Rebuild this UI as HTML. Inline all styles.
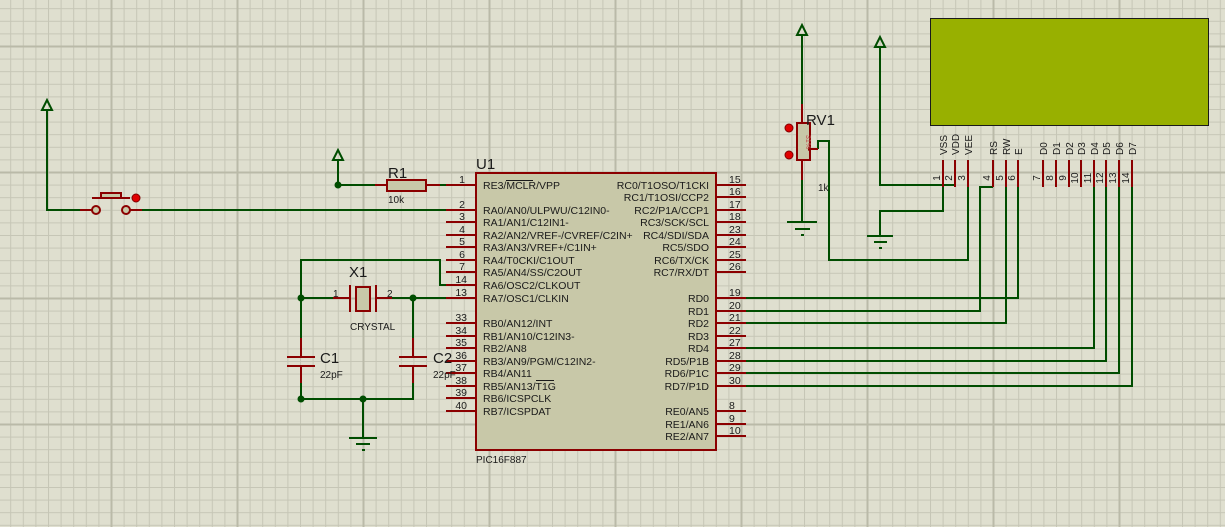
<!DOCTYPE html>
<html><head><meta charset="utf-8"><style>
html,body{margin:0;padding:0;background:#dfdfcf;}
svg{display:block;font-family:"Liberation Sans",Arial,sans-serif;}
</style></head><body>
<svg width="1225" height="527" viewBox="0 0 1225 527" xmlns="http://www.w3.org/2000/svg">
<defs>
<pattern id="mn" x="-15" y="-4.4" width="12.6" height="12.6" patternUnits="userSpaceOnUse">
<path d="M0.5 0V12.6M0 0.5H12.6" stroke="#c6c6b6" stroke-width="1" fill="none"/>
</pattern>
<pattern id="mj" x="-15.5" y="-80.5" width="126" height="126" patternUnits="userSpaceOnUse">
<path d="M1 0V126M0 1H126" stroke="#babaa8" stroke-width="2" fill="none"/>
</pattern>
</defs>
<rect width="1225" height="527" fill="#dfdfcf"/>
<rect width="1225" height="527" fill="url(#mn)"/>
<rect width="1225" height="527" fill="url(#mj)"/>

<rect x="930.5" y="18.5" width="278" height="107" fill="#98b000" stroke="#1a1a1a" stroke-width="1"/>

<g stroke="#004d00" stroke-width="2" fill="none">
<path d="M47 110V210H80"/>
<path d="M142 210H446"/>
<path d="M338 160V185H375"/>
<path d="M440 185H446"/>
<path d="M301 338V260H440V285H446"/>
<path d="M301 298H333"/>
<path d="M392 298H446"/>
<path d="M413 298V338"/>
<path d="M301 383V399H413V383"/>
<path d="M363 399V438"/>
<path d="M802 35V104"/>
<path d="M802 180V222"/>
<path d="M818 149V141H829V260H968V187"/>
<path d="M880 47V185H955"/>
<path d="M943 187V211H880V236"/>
<path d="M993 187H980V311H746"/>
<path d="M1006 187V323H746"/>
<path d="M1018 187V298H746"/>
<path d="M1094 187V348H746"/>
<path d="M1106 187V361H746"/>
<path d="M1119 187V373H746"/>
<path d="M1132 187V386H746"/>
</g>
<g stroke="#004d00" stroke-width="2" fill="none">
<path d="M42 110L47 100L52 110Z"/>
<path d="M333 160L338 150L343 160Z"/>
<path d="M797 35L802 25L807 35Z"/>
<path d="M875 47L880 37L885 47Z"/>
<path d="M349 438H377M356 444H370M362 450H365"/>
<path d="M787 222H817M795 229H810M801 235H804"/>
<path d="M867 236H893M874 242H887M879 248H882"/>
</g>
<g fill="#004d00">
<circle cx="338" cy="185" r="3.5"/>
<circle cx="301" cy="298" r="3.5"/>
<circle cx="413" cy="298" r="3.5"/>
<circle cx="301" cy="399" r="3.5"/>
<circle cx="363" cy="399" r="3.5"/>
</g>

<g stroke="#8b0000" stroke-width="2" fill="none">
<path d="M80 210H92M130 210H142"/>
<path d="M92 198H130"/>
<path d="M375 185H387M426 185H440"/>
<path d="M333 298H350M376 298H392"/>
<path d="M350 285V312M376 285V312"/>
<path d="M301 338V357M287 357H315M287 366H315M301 366V383"/>
<path d="M413 338V357M399 357H427M399 366H427M413 366V383"/>
<path d="M802 104V123M802 160V180"/>
<path d="M811 149H818"/>
<path d="M943 160V187M955 160V187M968 160V187M993 160V187M1006 160V187M1018 160V187M1043 160V187M1056 160V187M1069 160V187M1081 160V187M1094 160V187M1106 160V187M1119 160V187M1132 160V187"/>
<path d="M446 185H476M446 210H476M446 222H476M446 235H476M446 247H476M446 260H476M446 272H476M446 285H476M446 298H476M446 323H476M446 336H476M446 348H476M446 361H476M446 373H476M446 386H476M446 398H476M446 411H476"/>
<path d="M716 185H746M716 197H746M716 210H746M716 222H746M716 235H746M716 247H746M716 260H746M716 272H746M716 298H746M716 311H746M716 323H746M716 336H746M716 348H746M716 361H746M716 373H746M716 386H746M716 411H746M716 424H746M716 436H746"/>
</g>
<g stroke="#8b0000" stroke-width="2" fill="#c8c8a8">
<circle cx="96" cy="210" r="4"/>
<circle cx="126" cy="210" r="4"/>
<rect x="101" y="193" width="20" height="5"/>
<rect x="387" y="180" width="39" height="11"/>
<rect x="356" y="287" width="14" height="24"/>
<rect x="797" y="123" width="13" height="37"/>
<rect x="476" y="173" width="240" height="277"/>
</g>
<path d="M811 149l-3 -2v4z" fill="#8b0000"/>
<text x="806" y="142" font-size="7" fill="#c05050" transform="rotate(90 806 142)" text-anchor="middle">31%</text>
<g fill="#e00000" stroke="#800000" stroke-width="1">
<circle cx="136" cy="198" r="4"/>
<circle cx="789" cy="128" r="4"/>
<circle cx="789" cy="155" r="4"/>
</g>

<g fill="#1a1a1a">
<text x="476" y="169" font-size="15">U1</text>
<text x="476" y="463" font-size="10">PIC16F887</text>
<text x="388" y="178" font-size="15">R1</text>
<text x="388" y="203" font-size="10">10k</text>
<text x="349" y="277" font-size="15">X1</text>
<text x="333" y="297" font-size="10">1</text>
<text x="387" y="297" font-size="10">2</text>
<text x="350" y="330" font-size="10">CRYSTAL</text>
<text x="320" y="363" font-size="15">C1</text>
<text x="320" y="378" font-size="10">22pF</text>
<text x="433" y="363" font-size="15">C2</text>
<text x="433" y="378" font-size="10">22pF</text>
<text x="806" y="125" font-size="15">RV1</text>
<text x="818" y="191" font-size="10">1k</text>
</g>
<g fill="#1a1a1a" font-size="10.5">
<text x="483" y="189">RE3/MCLR/VPP</text>
<text x="483" y="214">RA0/AN0/ULPWU/C12IN0-</text>
<text x="483" y="226">RA1/AN1/C12IN1-</text>
<text x="483" y="239">RA2/AN2/VREF-/CVREF/C2IN+</text>
<text x="483" y="251">RA3/AN3/VREF+/C1IN+</text>
<text x="483" y="264">RA4/T0CKI/C1OUT</text>
<text x="483" y="276">RA5/AN4/SS/C2OUT</text>
<text x="483" y="289">RA6/OSC2/CLKOUT</text>
<text x="483" y="302">RA7/OSC1/CLKIN</text>
<text x="483" y="327">RB0/AN12/INT</text>
<text x="483" y="340">RB1/AN10/C12IN3-</text>
<text x="483" y="352">RB2/AN8</text>
<text x="483" y="365">RB3/AN9/PGM/C12IN2-</text>
<text x="483" y="377">RB4/AN11</text>
<text x="483" y="390">RB5/AN13/T1G</text>
<text x="483" y="402">RB6/ICSPCLK</text>
<text x="483" y="415">RB7/ICSPDAT</text>
</g>
<path d="M506 180.5H533M536 380.5H554" stroke="#1a1a1a" stroke-width="1"/>
<g fill="#1a1a1a" font-size="10.5" text-anchor="end">
<text x="709" y="189">RC0/T1OSO/T1CKI</text>
<text x="709" y="201">RC1/T1OSI/CCP2</text>
<text x="709" y="214">RC2/P1A/CCP1</text>
<text x="709" y="226">RC3/SCK/SCL</text>
<text x="709" y="239">RC4/SDI/SDA</text>
<text x="709" y="251">RC5/SDO</text>
<text x="709" y="264">RC6/TX/CK</text>
<text x="709" y="276">RC7/RX/DT</text>
<text x="709" y="302">RD0</text>
<text x="709" y="315">RD1</text>
<text x="709" y="327">RD2</text>
<text x="709" y="340">RD3</text>
<text x="709" y="352">RD4</text>
<text x="709" y="365">RD5/P1B</text>
<text x="709" y="377">RD6/P1C</text>
<text x="709" y="390">RD7/P1D</text>
<text x="709" y="415">RE0/AN5</text>
<text x="709" y="428">RE1/AN6</text>
<text x="709" y="440">RE2/AN7</text>
</g>
<g fill="#1a1a1a" font-size="10.5" text-anchor="end">
<text x="465" y="183">1</text><text x="465" y="208">2</text><text x="465" y="220">3</text><text x="465" y="233">4</text><text x="465" y="245">5</text><text x="465" y="258">6</text><text x="465" y="270">7</text><text x="467" y="283">14</text><text x="467" y="296">13</text><text x="467" y="321">33</text><text x="467" y="334">34</text><text x="467" y="346">35</text><text x="467" y="359">36</text><text x="467" y="371">37</text><text x="467" y="384">38</text><text x="467" y="396">39</text><text x="467" y="409">40</text>
</g>
<g fill="#1a1a1a" font-size="10.5">
<text x="729" y="183">15</text><text x="729" y="195">16</text><text x="729" y="208">17</text><text x="729" y="220">18</text><text x="729" y="233">23</text><text x="729" y="245">24</text><text x="729" y="258">25</text><text x="729" y="270">26</text><text x="729" y="296">19</text><text x="729" y="309">20</text><text x="729" y="321">21</text><text x="729" y="334">22</text><text x="729" y="346">27</text><text x="729" y="359">28</text><text x="729" y="371">29</text><text x="729" y="384">30</text><text x="729" y="409">8</text><text x="729" y="422">9</text><text x="729" y="434">10</text>
</g>
<g fill="#1a1a1a" font-size="10">
<text transform="translate(947 155) rotate(-90)">VSS</text>
<text transform="translate(959 155) rotate(-90)">VDD</text>
<text transform="translate(972 155) rotate(-90)">VEE</text>
<text transform="translate(997 155) rotate(-90)">RS</text>
<text transform="translate(1010 155) rotate(-90)">RW</text>
<text transform="translate(1022 155) rotate(-90)">E</text>
<text transform="translate(1047 155) rotate(-90)">D0</text>
<text transform="translate(1060 155) rotate(-90)">D1</text>
<text transform="translate(1073 155) rotate(-90)">D2</text>
<text transform="translate(1085 155) rotate(-90)">D3</text>
<text transform="translate(1098 155) rotate(-90)">D4</text>
<text transform="translate(1110 155) rotate(-90)">D5</text>
<text transform="translate(1123 155) rotate(-90)">D6</text>
<text transform="translate(1136 155) rotate(-90)">D7</text>
</g>
<g fill="#1a1a1a" font-size="10" text-anchor="middle">
<text transform="translate(940 178) rotate(-90)">1</text>
<text transform="translate(952 178) rotate(-90)">2</text>
<text transform="translate(965 178) rotate(-90)">3</text>
<text transform="translate(990 178) rotate(-90)">4</text>
<text transform="translate(1003 178) rotate(-90)">5</text>
<text transform="translate(1015 178) rotate(-90)">6</text>
<text transform="translate(1040 178) rotate(-90)">7</text>
<text transform="translate(1053 178) rotate(-90)">8</text>
<text transform="translate(1066 178) rotate(-90)">9</text>
<text transform="translate(1078 178) rotate(-90)">10</text>
<text transform="translate(1091 178) rotate(-90)">11</text>
<text transform="translate(1103 178) rotate(-90)">12</text>
<text transform="translate(1116 178) rotate(-90)">13</text>
<text transform="translate(1129 178) rotate(-90)">14</text>
</g>
</svg>
</body></html>
